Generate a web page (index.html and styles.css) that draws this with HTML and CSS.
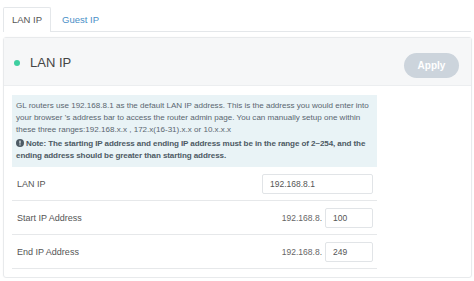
FILE: index.html
```html
<!DOCTYPE html>
<html>
<head>
<meta charset="utf-8">
<link rel="stylesheet" href="styles.css">
</head>
<body>
<div class="tabs">
  <div class="tab active">LAN IP</div>
  <div class="tab">Guest IP</div>
</div>
<div class="card">
  <div class="card-head">
    <span class="dot"></span>
    <span class="title">LAN IP</span>
    <button class="apply">Apply</button>
  </div>
  <div class="card-body">
    <div class="info">
      <p>GL routers use 192.168.8.1 as the default LAN IP address. This is the address you would enter into your browser 's address bar to access the router admin page. You can manually setup one within these three ranges:192.168.x.x , 172.x(16-31).x.x or 10.x.x.x</p>
      <p class="note"><svg class="ico" viewBox="0 0 8 8" width="8" height="8"><circle cx="4" cy="4" r="4" fill="#4d5a64"/><rect x="3.4" y="1.6" width="1.2" height="3" fill="#e9f3f6"/><rect x="3.4" y="5.3" width="1.2" height="1.1" fill="#e9f3f6"/></svg>Note: The starting IP address and ending IP address must be in the range of 2~254, and the ending address should be greater than starting address.</p>
    </div>
    <div class="row">
      <span class="label">LAN IP</span>
      <div class="field"><input class="wide" value="192.168.8.1"></div>
    </div>
    <div class="row">
      <span class="label">Start IP Address</span>
      <div class="field"><span class="prefix">192.168.8.</span><input class="short" value="100"></div>
    </div>
    <div class="row">
      <span class="label">End IP Address</span>
      <div class="field"><span class="prefix">192.168.8.</span><input class="short" value="249"></div>
    </div>
  </div>
</div>
</body>
</html>
```
FILE: styles.css
```css
* { box-sizing: border-box; }
body {
  margin: 0;
  padding: 7px 3px 0 3px;
  font-family: "Liberation Sans", Arial, sans-serif;
  background: #fff;
  color: #555;
}
.tabs {
  display: flex;
  border-bottom: 1px solid #e4e7ea;
  height: 25px;
}
.tab {
  font-size: 9.5px;
  color: #4a8fc7;
  padding: 0 10px;
  line-height: 23px;
  border: 1px solid transparent;
  border-bottom: none;
  margin-bottom: -1px;
}
.tab.active {
  color: #555;
  border-color: #e4e7ea;
  background: #fff;
  height: 25px;
  border-radius: 2px 2px 0 0;
  padding: 0 8px;
}
.card {
  margin-top: 5px;
  width: 469px;
  border: 1px solid #e8eaec;
  border-radius: 3px;
  height: 241px;
  box-shadow: 0 0 2px rgba(0,0,0,0.04);
}
.card-head {
  background: #f6f7f8;
  height: 48px;
  display: flex;
  align-items: center;
  padding: 0 12px 0 10px;
  border-bottom: 1px solid #eceef0;
}
.dot {
  width: 6px; height: 6px;
  border-radius: 50%;
  background: #3ecfa0;
  margin-right: 10px;
  margin-top: 2px;
}
.title {
  font-size: 13px;
  color: #444;
  flex: 1;
  margin-top: 2px;
}
.apply {
  width: 55px;
  height: 25px;
  border: none;
  border-radius: 13px;
  background: #ccd4dc;
  color: #fff;
  font-family: inherit;
  font-size: 10px;
  font-weight: bold;
  margin-top: 7px;
}
.card-body {
  padding: 9px 0 0 8px;
}
.info {
  width: 365px;
  background: #e9f3f6;
  padding: 5px 3px 5px 4px;
  font-size: 8.05px;
  line-height: 12px;
  color: #5a6670;
}
.info p { margin: 0; }
.info .note {
  margin-top: 2px;
  font-weight: bold;
  color: #4d5a64;
  letter-spacing: -0.1px;
}
.ico {
  vertical-align: -1px;
  margin-right: 2px;
}
.row {
  width: 365px;
  height: 34px;
  display: flex;
  align-items: center;
  justify-content: space-between;
  border-bottom: 1px solid #e6e8ea;
  padding: 1px 4px 0 5px;
}
.label {
  font-size: 9px;
  color: #555;
}
.field {
  display: flex;
  align-items: center;
}
.prefix {
  font-size: 8.5px;
  color: #666;
  margin-right: 3px;
}
input {
  height: 20px;
  border: 1px solid #e1e4e7;
  border-radius: 2px;
  font-family: inherit;
  font-size: 8.5px;
  color: #555;
  padding: 0 7px;
  background: #fff;
  outline: none;
}
input.wide { width: 111px; }
input.short { width: 48px; }
```
